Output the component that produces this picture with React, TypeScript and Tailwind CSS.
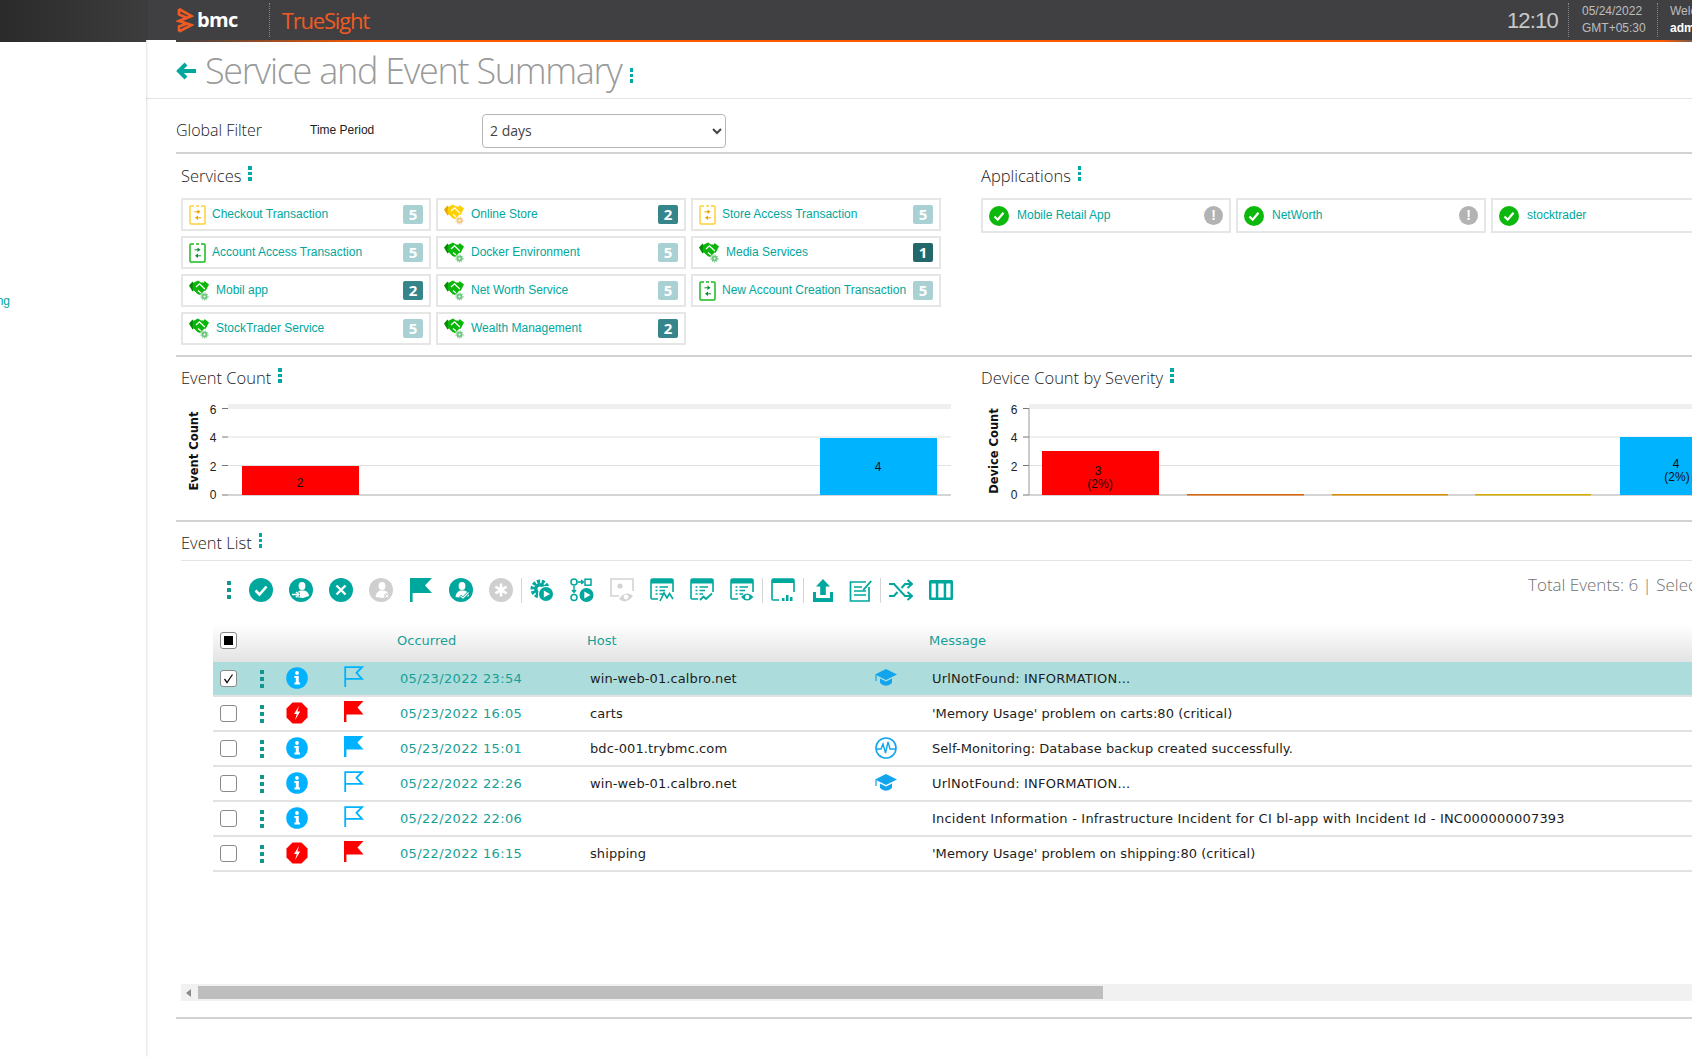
import React from "react";

const TEAL = "#00a79d";
const BLUE = "#00b2ff";

const services = [
  { label: "Checkout Transaction", icon: "tx", color: "#ffcf3a", count: 5 },
  { label: "Online Store", icon: "shake", color: "#ffd000", count: 2 },
  { label: "Store Access Transaction", icon: "tx", color: "#ffcf3a", count: 5 },
  { label: "Account Access Transaction", icon: "tx", color: "#19b91f", count: 5 },
  { label: "Docker Environment", icon: "shake", color: "#0bb60b", count: 5 },
  { label: "Media Services", icon: "shake", color: "#0bb60b", count: 1 },
  { label: "Mobil app", icon: "shake", color: "#0bb60b", count: 2 },
  { label: "Net Worth Service", icon: "shake", color: "#0bb60b", count: 5 },
  { label: "New Account Creation Transaction", icon: "tx", color: "#19b91f", count: 5 },
  { label: "StockTrader Service", icon: "shake", color: "#0bb60b", count: 5 },
  { label: "Wealth Management", icon: "shake", color: "#0bb60b", count: 2 },
];

const apps = ["Mobile Retail App", "NetWorth", "stocktrader"];

const events = [
  { date: "05/23/2022 23:54", host: "win-web-01.calbro.net", sev: "info", flag: "outline", extra: "cap", msg: "UrlNotFound: INFORMATION...", wide: true, selected: true },
  { date: "05/23/2022 16:05", host: "carts", sev: "crit", flag: "red", extra: "", msg: "'Memory Usage' problem on carts:80 (critical)" },
  { date: "05/23/2022 15:01", host: "bdc-001.trybmc.com", sev: "info", flag: "solid", extra: "pulse", msg: "Self-Monitoring: Database backup created successfully." },
  { date: "05/22/2022 22:26", host: "win-web-01.calbro.net", sev: "info", flag: "outline", extra: "cap", msg: "UrlNotFound: INFORMATION...", wide: true },
  { date: "05/22/2022 22:06", host: "", sev: "info", flag: "outline", extra: "", msg: "Incident Information - Infrastructure Incident for CI bl-app with Incident Id - INC000000007393", wide: true },
  { date: "05/22/2022 16:15", host: "shipping", sev: "crit", flag: "red", extra: "", msg: "'Memory Usage' problem on shipping:80 (critical)" },
];

function Dots() {
  return (
    <span className="flex flex-col gap-[2px]">
      <i className="block w-[3.5px] h-[3.5px] bg-[#00a9a5]" />
      <i className="block w-[3.5px] h-[3.5px] bg-[#00a9a5]" />
      <i className="block w-[3.5px] h-[3.5px] bg-[#00a9a5]" />
    </span>
  );
}

function RowDots() {
  return (
    <span className="inline-flex flex-col gap-[3px]">
      <i className="block w-[4px] h-[4px] bg-[#12978f]" />
      <i className="block w-[4px] h-[4px] bg-[#12978f]" />
      <i className="block w-[4px] h-[4px] bg-[#12978f]" />
    </span>
  );
}

function Handshake({ color }: { color: string }) {
  const dark = color === "#ffd000" ? "#e6a800" : "#058a05";
  const gear = color === "#ffd000" ? "#f2c77e" : "#6fc77f";
  return (
    <svg width="20" height="21" viewBox="0 0 20 21">
      <path d="M0 5.5 L3.5 1.5 L7.5 8 L3.5 11.5z" fill={dark} />
      <path d="M20 4.5 L15.5 1 L13 9 L16.5 11z" fill={color} />
      <path d="M4 3 L9 0.5 L12 2.5 L16 2.5 L18 8 L11 15 L8.5 14 L3.5 9z" fill={color} />
      <path d="M7 7 L10.5 3.8 L15.8 9 M9 10.5 L12 13" stroke="#fff" strokeWidth="1.2" fill="none" />
      <circle cx="15.5" cy="16.5" r="3" fill={gear} />
      <circle cx="15.5" cy="16.5" r="3.6" fill="none" stroke={gear} strokeWidth="1" strokeDasharray="1.2 1.2" />
      <circle cx="15.5" cy="16.5" r="1" fill="#fff" />
    </svg>
  );
}

function TxIcon({ color }: { color: string }) {
  const ink = color === "#ffcf3a" ? "#e8a400" : "#0a8f2a";
  return (
    <svg width="17" height="20" viewBox="0 0 17 20" fill="none">
      <path d="M5 1 H2 Q1 1 1 2 V18 Q1 19 2 19 H15 Q16 19 16 18 V2 Q16 1 15 1 H12" stroke={color} strokeWidth="1.5" />
      <path d="M7 1 H10" stroke={color} strokeWidth="1.5" />
      <path d="M5.5 6.8 H9 M12 12.8 H8.5" stroke={ink} strokeWidth="1" />
      <path d="M8.5 4.6 L11.5 6.8 L8.5 9z M9 10.6 L6 12.8 L9 15z" fill={ink} />
    </svg>
  );
}

function Flag({ kind }: { kind: string }) {
  const c = kind === "red" ? "#ff0000" : BLUE;
  if (kind === "outline") {
    return (
      <svg width="20" height="21" viewBox="0 0 20 21" fill="none">
        <path d="M1.2 21 V1.2 H18 L12.5 6.8 L18 12.8 H1.2" stroke={c} strokeWidth="1.8" />
      </svg>
    );
  }
  return (
    <svg width="20" height="21" viewBox="0 0 20 21">
      <path d="M0 21 V0 H19.5 L13.5 6.5 L19.5 13.5 H2.4 V21z" fill={c} />
    </svg>
  );
}

function Severity({ kind }: { kind: string }) {
  if (kind === "crit") {
    return (
      <svg width="22" height="22" viewBox="0 0 22 22">
        <path d="M6.5 0.5 H15.5 L21.5 6.5 V15.5 L15.5 21.5 H6.5 L0.5 15.5 V6.5z" fill="#ff0000" />
        <path d="M13 4 L8 12 H10.8 L9 18 L14.2 9.5 H11.4z" fill="#fff" />
      </svg>
    );
  }
  return (
    <svg width="22" height="22" viewBox="0 0 22 22">
      <circle cx="11" cy="11" r="10.8" fill={BLUE} />
      <circle cx="11" cy="6" r="1.9" fill="#fff" />
      <path d="M8.4 9 H12.8 V15.4 H14 V17.4 H8.4 V15.4 H9.8 V11 H8.4z" fill="#fff" />
    </svg>
  );
}

function Extra({ kind }: { kind: string }) {
  if (kind === "cap") {
    return (
      <svg width="22" height="18" viewBox="0 0 22 18">
        <path d="M11 0 L22 5.5 L11 11 L0 5.5z" fill="#12a5ee" />
        <path d="M5 9.5 L11 12.5 L17 9.5 V14 Q11 19.5 5 14z" fill="#12a5ee" />
        <path d="M1 6 V12" stroke="#12a5ee" strokeWidth="1.2" />
      </svg>
    );
  }
  if (kind === "pulse") {
    return (
      <svg width="22" height="22" viewBox="0 0 22 22" fill="none">
        <circle cx="11" cy="11" r="10" stroke="#12a5ee" strokeWidth="1.6" />
        <path d="M1.5 12 H6 L8 7 L10.5 16 L13 5 L15 12 H20.5" stroke="#12a5ee" strokeWidth="1.4" />
      </svg>
    );
  }
  return null;
}

// toolbar glyphs, all drawn on a 24 box
function Round({ grey, children }: { grey?: boolean; children: React.ReactNode }) {
  return (
    <svg width="24" height="24" viewBox="0 0 24 24">
      <circle cx="12" cy="12" r="12" fill={grey ? "#cfcfcf" : TEAL} />
      {children}
    </svg>
  );
}

function User() {
  return (
    <>
      <ellipse cx="13" cy="8" rx="3.4" ry="4" fill="#fff" />
      <path d="M6.5 19 Q7 14 11 12.5 L15.5 12.5 Q20 14 20 18 L14 20z" fill="#fff" />
    </>
  );
}

function Sheet({ children, grey }: { children?: React.ReactNode; grey?: boolean }) {
  const c = grey ? "#d4d4d4" : TEAL;
  return (
    <svg width="24" height="24" viewBox="0 0 24 24" fill="none">
      <path d="M8 21 H2 Q1 21 1 20 V2.5 Q1 1 2.5 1 H21.5 Q23 1 23 2.5 V14" stroke={c} strokeWidth="1.6" />
      <rect x="1" y="1" width="22" height="4.5" fill={c} />
      {children}
    </svg>
  );
}

const sheetLines = (
  <path d="M5.5 9 H7.5 M9.5 9 H18 M5.5 12.5 H7.5 M9.5 12.5 H15 M5.5 16 H7.5 M9.5 16 H13" stroke={TEAL} strokeWidth="1.5" />
);

function Toolbar() {
  return (
    <div className="flex items-center h-[60px] pb-[2px] ml-[46px]">
      <div className="w-[14px] flex justify-start"><RowDots /></div>
      <Item><Round><path d="M6.5 12.5 L10.5 16.5 L17.5 8.5" stroke="#fff" strokeWidth="2.6" fill="none" /></Round></Item>
      <Item>
        <Round>
          <User />
          <path d="M2 16.5 H11" stroke={TEAL} strokeWidth="4" />
          <path d="M3 16.5 H9 M7 14 L10 16.5 L7 19" stroke="#fff" strokeWidth="1.4" fill="none" />
        </Round>
      </Item>
      <Item><Round><path d="M7.5 7.5 L16.5 16.5 M16.5 7.5 L7.5 16.5" stroke="#fff" strokeWidth="2.4" /></Round></Item>
      <Item>
        <Round grey>
          <User />
          <path d="M16 16 L20 20 M20 16 L16 20" stroke="#cfcfcf" strokeWidth="3" />
          <path d="M16.5 16.5 L19.5 19.5 M19.5 16.5 L16.5 19.5" stroke="#fff" strokeWidth="1" />
        </Round>
      </Item>
      <Item>
        <svg width="22" height="24" viewBox="0 0 22 24"><path d="M0 24 V0 H22 L15 7.5 L22 15 H2.6 V24z" fill={TEAL} /></svg>
      </Item>
      <Item>
        <Round>
          <User />
          <path d="M11 18 L14 20.5 L20 14" stroke={TEAL} strokeWidth="3" fill="none" />
          <path d="M11.5 18 L14 20 L19.5 14.5" stroke="#fff" strokeWidth="1.1" fill="none" />
        </Round>
      </Item>
      <Item><Round grey><path d="M12 5.5 V18.5 M6.4 8.7 L17.6 15.3 M17.6 8.7 L6.4 15.3" stroke="#fff" strokeWidth="2.6" /></Round></Item>
      <Sep />
      <Item>
        <svg width="24" height="24" viewBox="0 0 24 24">
          <circle cx="10" cy="11" r="7.5" fill="none" stroke={TEAL} strokeWidth="4" strokeDasharray="3 1.6" />
          <circle cx="10" cy="11" r="6" fill={TEAL} />
          <circle cx="10" cy="11" r="2.5" fill="#fff" />
          <circle cx="16" cy="16" r="8" fill="#fff" />
          <circle cx="16" cy="16" r="7" fill={TEAL} />
          <path d="M13.8 12.5 L20 16 L13.8 19.5z" fill="#fff" />
        </svg>
      </Item>
      <Item>
        <svg width="24" height="24" viewBox="0 0 24 24" fill="none">
          <circle cx="4" cy="4" r="3" stroke={TEAL} strokeWidth="1.5" />
          <circle cx="4" cy="19.5" r="3" stroke={TEAL} strokeWidth="1.5" />
          <rect x="15" y="1.2" width="6" height="6" stroke={TEAL} strokeWidth="1.5" />
          <path d="M7.5 4 H13 M11 2 L13.5 4 L11 6 M4 8 V14 M2 12 L4 14.5 L6 12" stroke={TEAL} strokeWidth="1.4" />
          <circle cx="16.5" cy="17" r="7" fill={TEAL} />
          <path d="M14.3 13.5 L20.5 17 L14.3 20.5z" fill="#fff" />
        </svg>
      </Item>
      <Item>
        <svg width="24" height="24" viewBox="0 0 24 24" fill="none">
          <path d="M9 18 H1 V1 H23 V13" stroke="#d4d4d4" strokeWidth="1.6" />
          <circle cx="10" cy="8" r="2.6" fill="#d4d4d4" />
          <path d="M9 21 Q16 12 23 18 Q16 27 9 21z" fill="#d4d4d4" />
          <circle cx="16" cy="19" r="2.4" fill="#fff" />
        </svg>
      </Item>
      <Item><Sheet>{sheetLines}<path d="M10 23 L14 15 L17 20 L19.5 15.5 L23 21" stroke={TEAL} strokeWidth="1.6" /></Sheet></Item>
      <Item><Sheet>{sheetLines}<path d="M10 22 L13.5 18.5 L16 21 L22 15.5" stroke={TEAL} strokeWidth="1.8" /></Sheet></Item>
      <Item><Sheet>{sheetLines}<path d="M11 19 Q17 12 23.5 19 Q17 26 11 19z" fill={TEAL} /><circle cx="17.2" cy="19" r="2.2" fill="#fff" /></Sheet></Item>
      <Sep />
      <Item>
        <svg width="24" height="24" viewBox="0 0 24 24" fill="none">
          <path d="M8 22 H2 Q1 22 1 21 V2.5 Q1 1 2.5 1 H21.5 Q23 1 23 2.5 V14" stroke={TEAL} strokeWidth="1.6" />
          <rect x="1" y="1" width="22" height="4" fill={TEAL} />
          <path d="M11 20 H13.5 V23 H11z M15 17 H17.5 V23 H15z M19 19 H21.5 V23 H19z" fill={TEAL} />
        </svg>
      </Item>
      <Sep />
      <Item w="w-[38px]">
        <svg width="20" height="24" viewBox="0 0 20 24">
          <path d="M10 1 L17 8.5 H12.8 V17 H7.2 V8.5 H3z" fill={TEAL} />
          <path d="M0 14 H3 V20 H17 V14 H20 V24 H0z" fill={TEAL} />
        </svg>
      </Item>
      <Item w="w-[38px]">
        <svg width="24" height="24" viewBox="0 0 24 24" fill="none">
          <path d="M17 4 H1.5 V23 H20 V9" stroke={TEAL} strokeWidth="1.7" />
          <path d="M5 9 H13 M5 13 H17 M5 17 H17" stroke={TEAL} strokeWidth="1.6" />
          <path d="M13.5 11.5 L21.5 2.5 L23 3.5 L15 12.5z" fill={TEAL} />
        </svg>
      </Item>
      <Sep />
      <Item>
        <svg width="24" height="22" viewBox="0 0 24 22" fill="none" stroke={TEAL} strokeWidth="2">
          <path d="M0 5 H5 L16 17 H22 M0 17 H5 L8.5 13 M12.5 9 L16 5 H22" />
          <path d="M18.5 1 L23 5 L18.5 9 M18.5 13 L23 17 L18.5 21" />
        </svg>
      </Item>
      <Item>
        <svg width="24" height="20" viewBox="0 0 24 20">
          <path fillRule="evenodd" d="M1.5 0 H22.5 Q24 0 24 1.5 V18.5 Q24 20 22.5 20 H1.5 Q0 20 0 18.5 V1.5 Q0 0 1.5 0z M2.5 3.5 V17.5 H6.8 V3.5z M9.3 3.5 V17.5 H14.7 V3.5z M17.2 3.5 V17.5 H21.5 V3.5z" fill={TEAL} />
        </svg>
      </Item>
    </div>
  );
}

function Item({ children, w }: { children: React.ReactNode; w?: string }) {
  return <div className={`${w || "w-[40px]"} flex justify-center items-center shrink-0`}>{children}</div>;
}

function Sep() {
  return <div className="w-px h-[25px] bg-[#d5d5d5] shrink-0" />;
}

function Checkbox({ state }: { state?: "checked" | "mixed" }) {
  return (
    <div className="w-[17px] h-[17px] rounded-[3px] border border-[#8a8a8a] bg-white flex items-center justify-center">
      {state === "mixed" && <div className="w-[9px] h-[9px] bg-black" />}
      {state === "checked" && (
        <svg width="11" height="11" viewBox="0 0 11 11" fill="none">
          <path d="M1.5 6 L4 9.5 L9.5 1.5" stroke="#111" strokeWidth="1.3" />
        </svg>
      )}
    </div>
  );
}

function SectionTitle({ children }: { children: React.ReactNode }) {
  return (
    <div className="flex items-start gap-[7px] font-['Open_Sans',sans-serif] font-light text-[16.5px] leading-[22px] text-[#222]">
      <span>{children}</span>
      <span className="flex mt-[1px]"><Dots /></span>
    </div>
  );
}

function Chart({ w, axis, left, children }: { w: number; axis: string; left: number; children: React.ReactNode }) {
  const rows = [
    { v: 6, y: 8.5 },
    { v: 4, y: 37 },
    { v: 2, y: 65.5 },
    { v: 0, y: 95 },
  ];
  return (
    <svg width={w} height="100" viewBox={`0 0 ${w} 100`} className="block" style={{ fontFamily: "'Liberation Sans', sans-serif" }}>
      <text transform={`rotate(-90 18 51)`} x="18" y="51" textAnchor="middle" fontFamily="'DejaVu Sans', sans-serif" fontWeight="700" fontSize="11.5" dy="-1" fill="#111">{axis}</text>
      <rect x={left} y="4" width={w - left} height="5" fill="#efefef" />
      {rows.map((r) => (
        <g key={r.v}>
          <path d={`M${left - 6} ${r.y} H${left}`} stroke="#777" />
          <text x={left - 15} y={r.v === 0 ? 99 : r.y + 5} textAnchor="middle" fontSize="12" fill="#222">{r.v}</text>
          {r.v !== 6 && r.v !== 0 && <path d={`M${left} ${r.y} H${w}`} stroke="#e0e0e0" />}
        </g>
      ))}
      <path d={`M${left} 95 H${w}`} stroke="#aaa" />
      {children}
    </svg>
  );
}

export default function App() {
  return (
    <div className="w-[1692px] h-[1057px] overflow-hidden flex bg-white font-['Liberation_Sans',sans-serif]">
      {/* left rail, pushed off canvas */}
      <aside className="w-[146px] shrink-0 h-full flex flex-col shadow-[1px_0_2px_rgba(0,0,0,0.12)] z-10 bg-white overflow-hidden">
        <div className="h-[42px] bg-[linear-gradient(90deg,#2b2b2b,#3d3d3d)] shrink-0" />
        <div className="mt-[251px] -ml-[46px] text-[12px] leading-[16px] text-[#00a79d] whitespace-nowrap">Monitoring</div>
      </aside>

      <main className="flex-1 min-w-0 overflow-hidden flex flex-col">
        {/* top bar */}
        <header className="shrink-0">
          <div className="h-[40px] bg-[#404042] flex items-center pl-[30px]">
            <svg width="18" height="26" viewBox="0 0 18 26" fill="none" stroke="#f15a22" strokeWidth="2.6">
              <path d="M3 2 L15.5 9 L3 14 L15.5 18 L3 24.5 M3 2 V7.5 L10 10.5 M3 24.5 V19.5 L10 17" />
            </svg>
            <span className="ml-[3px] font-['Open_Sans',sans-serif] font-bold text-[20px] tracking-[-0.6px] text-white leading-none">bmc</span>
            <div className="ml-[31px] h-[34px] border-l border-dotted border-[#888]" />
            <span className="ml-[12px] font-['Open_Sans',sans-serif] text-[22px] tracking-[-1.2px] text-[#f15a22] leading-none">TrueSight</span>
            <div className="ml-auto flex items-center h-full">
              <span className="text-[22px] tracking-[-0.8px] text-[#c8c8c8] font-light">12:10</span>
              <div className="ml-[10px] h-[34px] border-l border-dotted border-[#888]" />
              <div className="ml-[13px] w-[75px] text-[12px] leading-[17px] text-[#bdbdbd]">
                <div>05/24/2022</div>
                <div>GMT+05:30</div>
              </div>
              <div className="ml-0 h-[34px] border-l border-dotted border-[#888]" />
              <div className="ml-[12px] w-[22px] overflow-hidden text-[12px] leading-[17px] whitespace-nowrap">
                <div className="text-[#bdbdbd]">Welcome</div>
                <div className="text-white font-bold">admin</div>
              </div>
            </div>
          </div>
          <div className="ml-[30px] h-[2px] bg-[linear-gradient(90deg,#404042_0%,#ff5a00_13%,#ff5a00_98%,#7a5a4a_100%)]" />
        </header>

        {/* page title */}
        <div className="h-[57px] shrink-0 border-b border-[#e4e4e4] flex items-center pl-[30px] pt-[1px]">
          <svg width="20" height="18" viewBox="0 0 20 18" fill="none" stroke={TEAL} strokeWidth="4">
            <path d="M20 9 H4 M10 2 L3 9 L10 16" />
          </svg>
          <h1 className="ml-[9px] font-['Open_Sans',sans-serif] font-light text-[36px] leading-[44px] tracking-[-1.27px] text-[#9a9a9a]">
            Service and Event Summary
          </h1>
          <span className="flex ml-[8px] mt-[10px]"><Dots /></span>
        </div>

        {/* global filter */}
        <div className="ml-[30px] h-[55px] shrink-0 border-b-2 border-[#d2d2d2] flex items-center pt-[11px]">
          <span className="w-[134px] -mt-[3px] font-['Open_Sans',sans-serif] font-light text-[16px] text-[#222]">Global Filter</span>
          <span className="w-[172px] -mt-[2px] text-[12px] text-[#222]">Time Period</span>
          <select defaultValue="2" className="w-[244px] h-[34px] rounded-[4px] border border-[#b5b5b5] bg-white pl-[3px] pb-[2px] font-['Open_Sans',sans-serif] text-[14px] text-[#444]">
            <option value="2">2 days</option>
          </select>
        </div>

        {/* services + applications */}
        <div className="ml-[35px] h-[201px] shrink-0 flex pt-[11px]">
          <section className="w-[800px] shrink-0">
            <SectionTitle>Services</SectionTitle>
            <div className="mt-[11px] grid grid-cols-[250px_250px_250px] gap-[5px]">
              {services.map((s) => (
                <div key={s.label} className="h-[33px] border-2 border-[#e6e6e6] flex items-center pl-[6px] pr-[6px]">
                  <span className={`${s.icon === "tx" ? "w-[23px]" : "w-[27px]"} shrink-0 flex`}>
                    {s.icon === "tx" ? <TxIcon color={s.color} /> : <Handshake color={s.color} />}
                  </span>
                  <span className="text-[12px] text-[#00a79d] whitespace-nowrap -mt-[2px]">{s.label}</span>
                  <span className={`ml-auto shrink-0 w-[20px] h-[19px] rounded-[2px] flex items-center justify-center font-['Open_Sans',sans-serif] font-bold text-[15px] text-white ${s.count === 5 ? "bg-[#a9d1d4]" : s.count === 2 ? "bg-[#36858a]" : "bg-[#22686a]"}`}>
                    {s.count}
                  </span>
                </div>
              ))}
            </div>
          </section>
          <section className="flex-1 min-w-0">
            <SectionTitle>Applications</SectionTitle>
            <div className="mt-[11px] flex gap-[5px]">
              {apps.map((a, i) => (
                <div key={a} className="w-[250px] shrink-0 h-[35px] border-2 border-[#e6e6e6] flex items-center pl-[6px] pr-[6px]">
                  <svg width="20" height="20" viewBox="0 0 20 20" className="shrink-0">
                    <circle cx="10" cy="10" r="10" fill="#0db80d" />
                    <path d="M5.5 10.5 L8.7 13.7 L14.5 6.8" stroke="#fff" strokeWidth="2.2" fill="none" />
                  </svg>
                  <span className="ml-[8px] -mt-[1px] text-[12px] text-[#00a79d] whitespace-nowrap">{a}</span>
                  {i < 2 && (
                    <span className="ml-auto w-[19px] h-[19px] rounded-full bg-[#b3b3b3] flex items-center justify-center text-white font-bold text-[14px]">!</span>
                  )}
                </div>
              ))}
            </div>
          </section>
        </div>

        {/* charts */}
        <div className="ml-[30px] h-[167px] shrink-0 border-t-2 border-b-2 border-[#d2d2d2] flex pl-[5px] pt-[10px]">
          <section className="w-[800px] shrink-0">
            <SectionTitle>Event Count</SectionTitle>
            <div className="mt-[11px]">
              <Chart w={770} axis="Event Count" left={47}>
                <rect x="61" y="66" width="117" height="29" fill="#ff0000" />
                <rect x="639" y="38" width="117" height="57" fill="#00b3ff" />
                <text x="119" y="87" textAnchor="middle" fontSize="12" fill="#111">2</text>
                <text x="697" y="71" textAnchor="middle" fontSize="12" fill="#111">4</text>
              </Chart>
            </div>
          </section>
          <section className="flex-1 min-w-0">
            <SectionTitle>Device Count by Severity</SectionTitle>
            <div className="mt-[11px]">
              <Chart w={711} axis="Device Count" left={48}>
                <path d="M48 8 V95" stroke="#999" />
                <rect x="61" y="51" width="117" height="44" fill="#ff0000" />
                <rect x="206" y="94" width="117" height="1.5" fill="#d9660a" />
                <rect x="351" y="94" width="116" height="1.5" fill="#d98f00" />
                <rect x="494" y="94" width="116" height="1.5" fill="#d4ad00" />
                <rect x="639" y="37" width="117" height="58" fill="#00b3ff" />
                <text x="117" y="75" textAnchor="middle" fontSize="12" fill="#111">3</text>
                <text x="119" y="88" textAnchor="middle" fontSize="12" fill="#111">(2%)</text>
                <text x="695" y="68" textAnchor="middle" fontSize="12" fill="#111">4</text>
                <text x="696" y="81" textAnchor="middle" fontSize="12" fill="#111">(2%)</text>
              </Chart>
            </div>
          </section>
        </div>

        {/* event list */}
        <section className="ml-[35px] flex-1 min-h-0 flex flex-col">
          <div className="h-[39px] shrink-0 border-b border-[#e4e4e4] pt-[10px]">
            <SectionTitle>Event List</SectionTitle>
          </div>
          <div className="relative shrink-0">
            <Toolbar />
            <span className="absolute left-[1347px] top-[11px] whitespace-nowrap font-['Open_Sans',sans-serif] font-light text-[17px] text-[#6f6f6f]">
              Total Events: 6 | Selected Events: 1
            </span>
          </div>
          <div className="ml-[32px] font-['DejaVu_Sans',sans-serif]">
            <div className="mt-[3px] h-[38px] pb-[5px] flex items-center bg-[linear-gradient(180deg,#ffffff,#e3e3e3)] text-[13px] text-[#16a096]">
              <div className="w-[30px] flex justify-center pl-[1px]"><Checkbox state="mixed" /></div>
              <div className="w-[154px]" />
              <div className="w-[190px]">Occurred</div>
              <div className="w-[342px]">Host</div>
              <div>Message</div>
            </div>
            {events.map((e) => (
              <div key={e.date} className={`h-[35px] flex items-center border-b-2 border-[#e2e2e2] text-[13px] text-[#1d1d1d] ${e.selected ? "bg-[#acdcdb]" : "bg-white"}`}>
                <div className="w-[30px] flex justify-center pl-[1px]"><Checkbox state={e.selected ? "checked" : undefined} /></div>
                <div className="w-[38px] flex justify-center"><RowDots /></div>
                <div className="w-[31px] flex justify-center -mt-[2px]"><Severity kind={e.sev} /></div>
                <div className="w-[88px] flex pl-[32px] -mt-[5px]"><Flag kind={e.flag} /></div>
                <div className="w-[190px] text-[#16a096] tracking-[0.35px]">{e.date}</div>
                <div className="w-[285px] whitespace-nowrap tracking-[0.1px]">{e.host}</div>
                <div className="w-[22px] flex justify-center -mt-[1px]"><Extra kind={e.extra} /></div>
                <div className={`ml-[35px] whitespace-nowrap ${e.wide ? "tracking-[0.2px]" : "tracking-[0.05px]"}`}>{e.msg}</div>
              </div>
            ))}
          </div>
          <div className="mt-[112px] h-[17px] bg-[#f1f1f1] flex items-center pl-[5px]">
            <svg width="6" height="8" viewBox="0 0 6 8"><path d="M5 0 V8 L0 4z" fill="#8a8a8a" /></svg>
            <div className="ml-[6px] w-[905px] h-[13px] bg-[#bebebe]" />
          </div>
          <div className="-ml-[5px] mt-[16px] border-t-2 border-[#d2d2d2]" />
        </section>
      </main>
    </div>
  );
}
